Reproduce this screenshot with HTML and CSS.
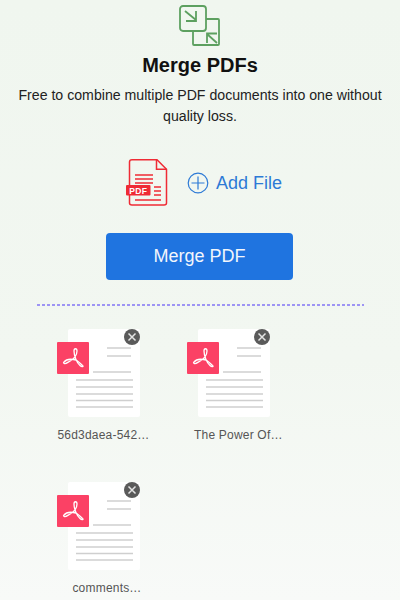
FILE: index.html
```html
<!DOCTYPE html>
<html lang="en">
<head>
    <meta charset="UTF-8">
    <meta name="viewport" content="width=device-width, initial-scale=1.0">
    <title>Merge PDFs</title>
    <link rel="stylesheet" href="styles.css">
</head>
<body>

    <!-- Shared file thumbnail -->
    <svg class="sprite" width="0" height="0">
        <symbol id="thumb" viewBox="0 0 92 100">
            <rect x="11" y="0" width="72" height="88" rx="2" fill="#fff"/>
            <path d="M50 19H74M50 27H74M36 43H74M19 51H76M19 58H76M19 65H76M19 71.500H76M19 78H76" stroke="#cfcfcf" stroke-width="1.500"/>
            <rect x="0" y="13" width="32" height="32" rx="1" fill="#fb4165"/>
            <path transform="translate(0 13)" d="M7 20C10 16 15 17 19 18C21 19 24 22 25.500 23.500C27 24.500 25 25.500 23 23.500C20 21 17 14 17 9C17 6 20 6 20 9C20 13 17 17 14 18.500C11 20 9 22 7.500 21.500C6 21.200 6.500 20.500 7 20Z" fill="none" stroke="#fff" stroke-width="1.300"/>
        </symbol>
    </svg>

    <header class="intro">
        <svg class="merge-icon" width="42" height="42" viewBox="0 0 42 42" fill="none" stroke="#5da060" stroke-width="1.800">
            <rect x="14" y="14" width="26" height="26" rx="1"/>
            <rect x="1" y="1" width="26" height="25" rx="3" fill="#f1f7f0"/>
            <path d="M6 6L17 15M17 6V16H7"/>
            <path d="M38 38L28 29M28 38V28.500H38"/>
        </svg>
        <h1>Merge PDFs</h1>
        <p>Free to combine multiple PDF documents into one without quality loss.</p>
    </header>

    <div class="add-row">
        <svg class="pdf-icon" width="44" height="48" viewBox="0 0 44 48" fill="none" stroke="#ef2b35" stroke-width="1.500">
            <path d="M3.500 26V3C3.500 1.500 4.500 .800 6 .800H31L40.500 10.300V44C40.500 45.500 39.500 46 38 46H6C4.500 46 3.500 45.500 3.500 44V36"/>
            <path d="M30.500 1V10.300H40.500"/>
            <path d="M9 16H27M9 20H27M9 24H27M28 28H35M28 32H35M28 36H35M9 41H35"/>
            <rect x="0" y="26" width="24.500" height="10.500" rx="1" fill="#ef2b35" stroke="none"/>
            <text x="12.200" y="34.800" class="pdf-label">PDF</text>
        </svg>
        <button class="add-button">
            <svg width="22" height="22" viewBox="0 0 22 22" fill="none" stroke="#2d7ad6" stroke-width="1.200">
                <circle cx="11" cy="11" r="9.800"/>
                <path d="M4.500 11H17.500M11 4.500V17.500"/>
            </svg>
            Add File
        </button>
    </div>

    <button class="merge-button">Merge PDF</button>

    <div class="divider"></div>

    <!-- Selected files -->
    <div class="file-grid">
        <div class="file">
            <div class="thumb">
                <svg width="92" height="100"><use href="#thumb"/></svg>
                <span class="remove">
                    <svg width="10" height="10" viewBox="0 0 10 10" stroke="#e4e4e4" stroke-width="1.500"><path d="M1.500 1.500L8.500 8.500M8.500 1.500L1.500 8.500"/></svg>
                </span>
            </div>
            <div class="file-name name-left">56d3daea-542…</div>
        </div>
        <div class="file">
            <div class="thumb">
                <svg width="92" height="100"><use href="#thumb"/></svg>
                <span class="remove">
                    <svg width="10" height="10" viewBox="0 0 10 10" stroke="#e4e4e4" stroke-width="1.500"><path d="M1.500 1.500L8.500 8.500M8.500 1.500L1.500 8.500"/></svg>
                </span>
            </div>
            <div class="file-name name-right">The Power Of…</div>
        </div>
        <div class="file">
            <div class="thumb">
                <svg width="92" height="100"><use href="#thumb"/></svg>
                <span class="remove">
                    <svg width="10" height="10" viewBox="0 0 10 10" stroke="#e4e4e4" stroke-width="1.500"><path d="M1.500 1.500L8.500 8.500M8.500 1.500L1.500 8.500"/></svg>
                </span>
            </div>
            <div class="file-name name-third">comments…</div>
        </div>
    </div>

</body>
</html>
```
FILE: styles.css
```css
/* General Body Styling */
html, body {
    margin: 0;
    padding: 0;
    height: 600px;
    overflow: hidden;
}
body {
    font-family: 'Liberation Sans', Arial, sans-serif;
    background: linear-gradient(180deg, #f0f6ef 0%, #f2f7f1 60%, #f8faf8 100%);
    color: #111;
}
.sprite {
    position: absolute;
}

/* Intro */
.intro {
    padding-top: 5px;
    text-align: center;
}
.merge-icon {
    display: block;
    margin: 0 auto;
}
.intro h1 {
    margin: 6px 0 0;
    font-size: 20px;
    line-height: 24px;
    font-weight: 700;
}
.intro p {
    margin: 8px 16px 0;
    font-size: 14.150px;
    line-height: 21px;
    color: #222;
}

/* Add File */
.add-row {
    display: flex;
    align-items: center;
    margin: 32px 0 0 126px;
    height: 48px;
}
.pdf-label {
    font-size: 8.500px;
    font-weight: 700;
    fill: #fff;
    stroke: none;
    text-anchor: middle;
    letter-spacing: 0.300px;
}
.add-button {
    display: flex;
    align-items: center;
    gap: 7px;
    margin-left: 17px;
    padding: 0;
    background: none;
    border: none;
    font: inherit;
    font-size: 18px;
    color: #2d7ad6;
}

/* Merge button */
.merge-button {
    display: block;
    width: 187px;
    height: 47px;
    margin: 26px 0 0 106px;
    background-color: #1f74e0;
    color: #f2f6fc;
    border: none;
    border-radius: 4px;
    font: inherit;
    font-size: 18px;
}

/* Divider */
.divider {
    height: 2px;
    margin: 24px 36px 0 37px;
    background: repeating-linear-gradient(90deg, #9d94f4 0, #9d94f4 3px, transparent 3px, transparent 5px);
}

/* File grid */
.file-grid {
    display: grid;
    grid-template-columns: 130px 130px;
    row-gap: 40px;
    margin: 23px 0 0 57px;
}
.file {
    width: 92px;
}
.thumb {
    position: relative;
    height: 100px;
}
.thumb > svg {
    display: block;
}
.remove {
    position: absolute;
    top: 0;
    left: 67px;
    width: 16px;
    height: 16px;
    border-radius: 50%;
    background: #5a5a5a;
    display: flex;
    align-items: center;
    justify-content: center;
}
.file-name {
    margin-top: -1px;
    white-space: nowrap;
    text-align: center;
    font-size: 12px;
    line-height: 14px;
    letter-spacing: 0.200px;
    color: #555;
}
.name-left {
    margin-right: -1px;
}
.name-right {
    padding-left: 7px;
}
.name-third {
    padding-left: 8px;
}
```
